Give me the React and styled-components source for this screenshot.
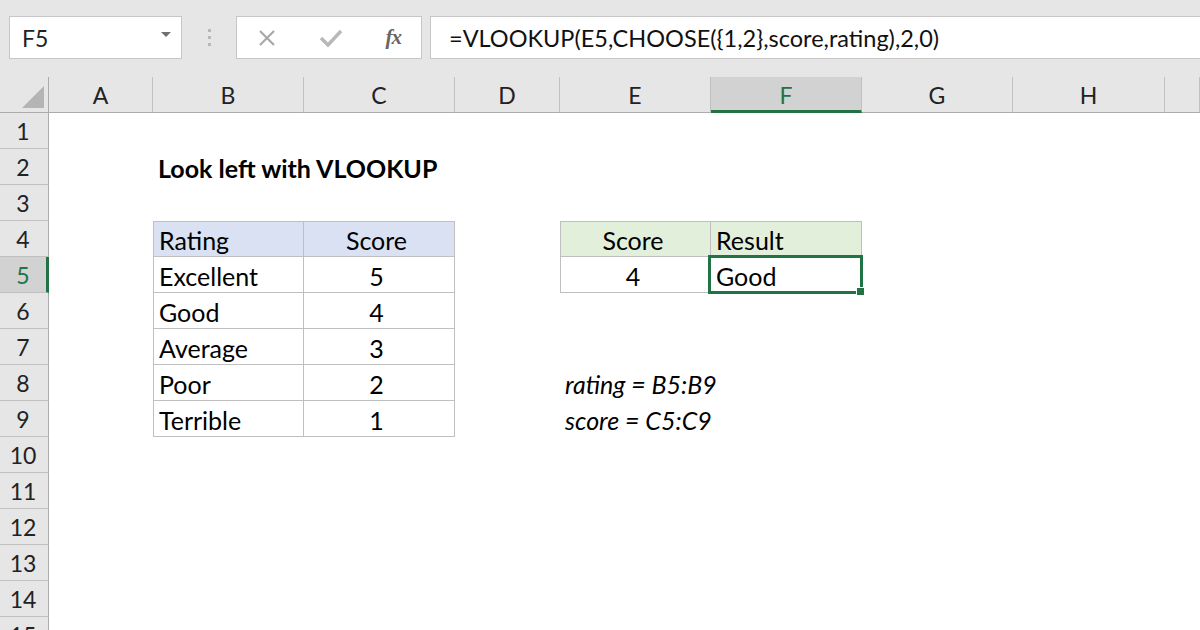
import React from "react";
import styled, { createGlobalStyle, css } from "styled-components";

const GlobalStyle = createGlobalStyle`
  html, body { margin: 0; padding: 0; }
  body {
    width: 1200px;
    height: 630px;
    overflow: hidden;
    background: #e6e6e6;
    font-family: Lato, "Open Sans", "Liberation Sans", sans-serif;
  }
`;

const Frame = styled.div`
  width: 1200px;
  height: 630px;
  display: flex;
  flex-direction: column;
  overflow: hidden;
  background: #e6e6e6;
`;

const Toolbar = styled.div`
  height: 77px;
  flex: none;
  display: flex;
  align-items: flex-start;
  padding: 16px 0 0 9px;
  box-sizing: border-box;
`;

const NameBox = styled.div`
  width: 173px;
  height: 43px;
  box-sizing: border-box;
  background: #fff;
  border: 1px solid #c6c6c6;
  display: flex;
  align-items: center;
  justify-content: space-between;
  padding: 0 10px 0 12px;
  font-size: 23px;
  color: #222;
`;

const DropArrow = styled.span`
  width: 0;
  height: 0;
  border-left: 5px solid transparent;
  border-right: 5px solid transparent;
  border-top: 5px solid #707070;
  margin-top: -6px;
`;

const Grip = styled.div`
  width: 54px;
  height: 43px;
  display: flex;
  flex-direction: column;
  align-items: center;
  justify-content: center;
  gap: 4px;
`;

const GripDot = styled.span`
  width: 3px;
  height: 3px;
  background: #b8b8b8;
`;

const ButtonBox = styled.div`
  width: 186px;
  height: 43px;
  box-sizing: border-box;
  background: #fff;
  border: 1px solid #c6c6c6;
  display: flex;
  align-items: center;
  padding: 0 20px 0 20px;
  justify-content: space-between;
`;

const FxLabel = styled.span`
  font-family: "Liberation Serif", "DejaVu Serif", serif;
  font-style: italic;
  font-weight: bold;
  font-size: 21px;
  color: #666;
  letter-spacing: -1px;
`;

const FormulaBox = styled.div`
  flex: 1;
  margin-left: 8px;
  margin-right: -10px;
  height: 43px;
  box-sizing: border-box;
  background: #fff;
  border: 1px solid #c6c6c6;
  display: flex;
  align-items: center;
  padding-left: 18px;
  font-size: 23.5px;
  color: #111;
  white-space: nowrap;
`;

const Sheet = styled.div`
  flex: 1;
  display: grid;
  grid-template-columns: 49px 104px 151px 151px 105px 151px 151px 151px 152px 1fr;
  grid-auto-rows: 36px;
  background: #fff;
  overflow: hidden;
`;

const Corner = styled.div`
  position: relative;
  background: #e6e6e6;
  border-right: 1px solid #ababab;
  border-bottom: 1px solid #ababab;
`;

const CornerTriangle = styled.span`
  position: absolute;
  right: 4px;
  bottom: 4px;
  width: 0;
  height: 0;
  border-left: 22px solid transparent;
  border-bottom: 22px solid #b4b4b4;
`;

const ColHeader = styled.div`
  background: ${(p) => (p.$selected ? "#d2d2d2" : "#e6e6e6")};
  border-right: 1px solid #c0c0c0;
  border-bottom: ${(p) => (p.$selected ? "3px solid #217346" : "1px solid #ababab")};
  box-sizing: border-box;
  display: flex;
  align-items: center;
  justify-content: center;
  font-size: 23px;
  color: ${(p) => (p.$selected ? "#217346" : "#222")};
  padding-top: ${(p) => (p.$selected ? "2px" : "0")};
`;

const RowHeader = styled.div`
  background: ${(p) => (p.$selected ? "#d2d2d2" : "#e6e6e6")};
  border-right: ${(p) => (p.$selected ? "3px solid #217346" : "1px solid #ababab")};
  border-bottom: 1px solid #c0c0c0;
  box-sizing: border-box;
  display: flex;
  align-items: center;
  justify-content: center;
  font-size: 23px;
  color: ${(p) => (p.$selected ? "#217346" : "#222")};
  padding-right: ${(p) => (p.$selected ? "0" : "2px")};
`;

const line = "1px solid #bfbfbf";

const Cell = styled.div`
  position: relative;
  box-sizing: border-box;
  display: flex;
  align-items: center;
  justify-content: ${(p) => (p.$align === "center" ? "center" : "flex-start")};
  padding: 2px 5px 0 ${(p) => (p.$align === "center" ? "0" : "5px")};
  background: ${(p) => p.$bg || "transparent"};
  font-size: 25px;
  color: #000;
  white-space: nowrap;
  font-weight: ${(p) => (p.$bold ? 700 : 400)};
  font-style: ${(p) => (p.$italic ? "italic" : "normal")};
  ${(p) =>
    p.$boxed &&
    css`
      border-right: ${line};
      border-bottom: ${line};
      border-left: ${p.$first ? line : "none"};
      border-top: ${p.$top ? line : "none"};
    `}
`;

const Selection = styled.span`
  position: absolute;
  left: -3px;
  top: -2px;
  right: -2px;
  bottom: -2px;
  border: 3px solid #217346;
  pointer-events: none;
`;

const FillHandle = styled.span`
  position: absolute;
  right: -5px;
  bottom: -5px;
  width: 7px;
  height: 7px;
  background: #217346;
  border: 1px solid #fff;
`;

const cols = ["A", "B", "C", "D", "E", "F", "G", "H", ""];

const blue = "#d9e1f2";
const green = "#e2efda";

const cells = {
  "2-B": { text: "Look left with VLOOKUP", bold: true },
  "4-B": { text: "Rating", boxed: true, first: true, top: true, bg: blue },
  "4-C": { text: "Score", boxed: true, top: true, bg: blue, align: "center" },
  "5-B": { text: "Excellent", boxed: true, first: true },
  "5-C": { text: "5", boxed: true, align: "center" },
  "6-B": { text: "Good", boxed: true, first: true },
  "6-C": { text: "4", boxed: true, align: "center" },
  "7-B": { text: "Average", boxed: true, first: true },
  "7-C": { text: "3", boxed: true, align: "center" },
  "8-B": { text: "Poor", boxed: true, first: true },
  "8-C": { text: "2", boxed: true, align: "center" },
  "9-B": { text: "Terrible", boxed: true, first: true },
  "9-C": { text: "1", boxed: true, align: "center" },
  "4-E": { text: "Score", boxed: true, first: true, top: true, bg: green, align: "center" },
  "4-F": { text: "Result", boxed: true, top: true, bg: green },
  "5-E": { text: "4", boxed: true, first: true, align: "center" },
  "5-F": { text: "Good", boxed: true, selected: true },
  "8-E": { text: "rating = B5:B9", italic: true },
  "9-E": { text: "score = C5:C9", italic: true },
};

const XIcon = () => (
  <svg width="20" height="20" viewBox="0 0 20 20">
    <path d="M3 3 L17 17 M17 3 L3 17" stroke="#a8a8a8" strokeWidth="2.2" fill="none" />
  </svg>
);

const CheckIcon = () => (
  <svg width="24" height="20" viewBox="0 0 24 20">
    <path d="M2 10 L9 17 L22 3" stroke="#b8b8b8" strokeWidth="3.4" fill="none" />
  </svg>
);

export default function App() {
  const rows = Array.from({ length: 15 }, (_, i) => i + 1);
  return (
    <Frame>
      <GlobalStyle />
      <Toolbar>
        <NameBox>
          <span>F5</span>
          <DropArrow />
        </NameBox>
        <Grip>
          <GripDot />
          <GripDot />
          <GripDot />
        </Grip>
        <ButtonBox>
          <XIcon />
          <CheckIcon />
          <FxLabel>fx</FxLabel>
        </ButtonBox>
        <FormulaBox>=VLOOKUP(E5,CHOOSE({"{"}1,2{"}"},score,rating),2,0)</FormulaBox>
      </Toolbar>
      <Sheet>
        <Corner>
          <CornerTriangle />
        </Corner>
        {cols.map((c, i) => (
          <ColHeader key={i} $selected={c === "F"}>
            {c}
          </ColHeader>
        ))}
        {rows.map((r) => (
          <React.Fragment key={r}>
            <RowHeader $selected={r === 5}>{r}</RowHeader>
            {cols.map((c, i) => {
              const d = cells[`${r}-${c}`];
              if (!d) return <Cell key={i} />;
              return (
                <Cell
                  key={i}
                  $boxed={d.boxed}
                  $first={d.first}
                  $top={d.top}
                  $bg={d.bg}
                  $align={d.align}
                  $bold={d.bold}
                  $italic={d.italic}
                >
                  {d.text}
                  {d.selected && (
                    <Selection>
                      <FillHandle />
                    </Selection>
                  )}
                </Cell>
              );
            })}
          </React.Fragment>
        ))}
      </Sheet>
    </Frame>
  );
}
